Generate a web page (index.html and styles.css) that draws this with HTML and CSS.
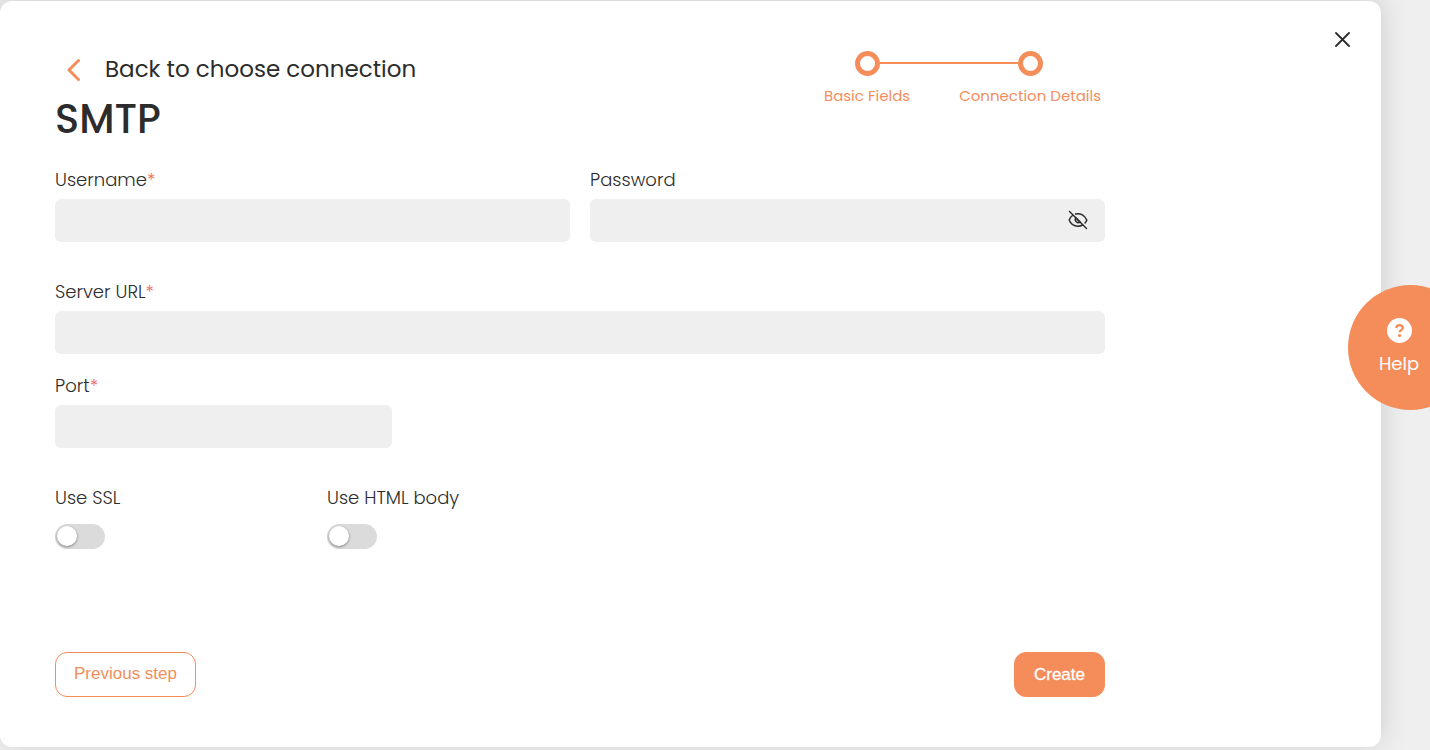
FILE: index.html
```html
<!DOCTYPE html>
<html lang="en">
<head>
    <meta charset="UTF-8">
    <meta name="viewport" content="width=device-width, initial-scale=1.0">
    <title>SMTP connection</title>
    <link rel="stylesheet" href="styles.css">
</head>
<body>
    <main class="panel">
        <button type="button" class="close-btn" aria-label="Close">
            <svg width="16" height="16" viewBox="0 0 16 16" fill="none" stroke="#2c2c2c" stroke-width="1.8" stroke-linecap="round">
                <path d="M2 2l13 13M15 2l-13 13"/>
            </svg>
        </button>

        <form class="connection-form">
            <header class="form-header">
                <div>
                    <a href="#" class="back-link">
                        <svg width="14" height="24" viewBox="0 0 14 24" fill="none" stroke="#f58d5a" stroke-width="3" stroke-linecap="round" stroke-linejoin="round">
                            <path d="M12.500 3.500L3 13l9.500 9.500"/>
                        </svg>
                        Back to choose connection
                    </a>
                    <h1>SMTP</h1>
                </div>
                <ol class="steps">
                    <li class="step">Basic Fields</li>
                    <li class="step">Connection Details</li>
                </ol>
            </header>

            <div class="row two-columns">
                <div class="field">
                    <label for="username">Username<span class="required">*</span></label>
                    <input type="text" id="username">
                </div>
                <div class="field">
                    <label for="password">Password</label>
                    <div class="password-box">
                        <input type="password" id="password">
                        <button type="button" class="eye-btn" aria-label="Show password">
                            <svg width="20" height="20" viewBox="0 0 20 20" fill="none" stroke="#2c2c2c" stroke-width="1.5" stroke-linecap="round">
                                <path d="M1.500 1.500l17 17"/>
                                <path d="M4.500 5.500C3 6.500 1.800 8.200 1.200 10c1.500 4 5 6.200 8.800 6.200 1.700 0 3.200-.4 4.500-1.200"/>
                                <path d="M7.500 4.100C12.500 3 17 5.500 18.800 10c-.4 1.100-1 2.100-1.800 3"/>
                                <path d="M7.800 7.800a3.200 3.200 0 0 0 4.400 4.400z"/>
                            </svg>
                        </button>
                    </div>
                </div>
            </div>

            <div class="row field">
                <label for="server">Server URL<span class="required">*</span></label>
                <input type="text" id="server">
            </div>

            <div class="row three-columns">
                <div class="field">
                    <label for="port">Port<span class="required">*</span></label>
                    <input type="text" id="port">
                </div>
            </div>

            <div class="row switches">
                <div class="switch-field">
                    <label for="ssl">Use SSL</label>
                    <input type="checkbox" class="switch" id="ssl">
                </div>
                <div class="switch-field">
                    <label for="html-body">Use HTML body</label>
                    <input type="checkbox" class="switch" id="html-body">
                </div>
            </div>

            <footer class="actions">
                <button type="button" class="btn btn-outline">Previous step</button>
                <button type="submit" class="btn btn-primary">Create</button>
            </footer>
        </form>
    </main>

    <button type="button" class="help-btn">
        <svg width="26" height="26" viewBox="0 0 26 26" fill="none">
            <circle cx="13.500" cy="13.500" r="12.500" fill="#fff"/>
            <path d="M10.200 11c.2-1.900 1.500-2.900 3.300-2.900 1.900 0 3.300 1.100 3.300 2.800 0 2.400-3.200 2.300-3.200 4.300" stroke="#f58d5a" stroke-width="2.400"/>
            <circle cx="13.600" cy="18.600" r="1.600" fill="#f58d5a"/>
        </svg>
        Help
    </button>
</body>
</html>
```
FILE: styles.css
```css
*,
*::before,
*::after {
    box-sizing: border-box;
}

body {
    margin: 0;
    min-height: 100vh;
    padding: 1px 49px 3px 0;
    display: flex;
    background-color: #efefef;
    color: #2c2c2c;
    font-family: Poppins, Inter, sans-serif;
    overflow: hidden;
}

/* Panel */
.panel {
    position: relative;
    flex: 1;
    padding: 50px 55px;
    background-color: #fff;
    border-radius: 12px;
    box-shadow: 0 -4px 30px rgba(0, 0, 0, 0.15);
}

.close-btn {
    position: absolute;
    top: 30px;
    right: 31px;
    padding: 0;
    border: none;
    background: none;
    line-height: 0;
    cursor: pointer;
}

.connection-form {
    max-width: 1050px;
}

/* Header */
.form-header {
    display: flex;
    justify-content: space-between;
    margin-bottom: 22px;
}

.back-link {
    display: flex;
    align-items: center;
    gap: 25px;
    padding-left: 11px;
    color: inherit;
    font-size: 23px;
    line-height: 36px;
    text-decoration: none;
}

h1 {
    margin: 6px 0 0;
    font-size: 40px;
    font-weight: 500;
    line-height: 52px;
}

.steps {
    display: flex;
    margin: 0;
    padding: 0;
    list-style: none;
}

.step {
    position: relative;
    display: flex;
    flex-direction: column;
    align-items: center;
    gap: 8px;
    color: #f58d5a;
    font-size: 15px;
    line-height: 24px;
}

.step + .step {
    margin-left: 49px;
    margin-right: 4px;
}

.step::before {
    content: "";
    width: 25px;
    height: 25px;
    border: 5px solid #f58d5a;
    border-radius: 50%;
}

/* Line that joins the two circles */
.step + .step::after {
    content: "";
    position: absolute;
    top: 11px;
    right: calc(50% + 12px);
    width: 138px;
    height: 2px;
    background-color: #f58d5a;
}

/* Fields */
.row {
    margin-bottom: 37px;
}

.row.field {
    margin-bottom: 19px;
}

.two-columns {
    display: grid;
    grid-template-columns: repeat(2, 1fr);
    gap: 20px;
}

.three-columns {
    display: grid;
    grid-template-columns: repeat(3, 1fr);
    gap: 20px;
}

.field {
    display: flex;
    flex-direction: column;
    gap: 6px;
}

label {
    font-size: 18px;
    font-weight: 300;
    line-height: 26px;
}

.required {
    color: #f26b5b;
}

.field input {
    width: 100%;
    height: 43px;
    padding: 0 16px;
    border: none;
    border-radius: 6px;
    background-color: #efefef;
    font: inherit;
}

.password-box {
    position: relative;
}

.eye-btn {
    position: absolute;
    top: 11px;
    right: 17px;
    padding: 0;
    border: none;
    background: none;
    line-height: 0;
    cursor: pointer;
}

/* Switches */
.switches {
    display: flex;
}

.switch-field {
    display: flex;
    flex-direction: column;
    gap: 13px;
    width: 272px;
}

.switch {
    appearance: none;
    width: 50px;
    height: 25px;
    margin: 0;
    padding: 2px;
    border-radius: 13px;
    background-color: #dbdbdb;
    cursor: pointer;
}

.switch::before {
    content: "";
    display: block;
    width: 20px;
    height: 20px;
    border-radius: 50%;
    background-color: #fff;
    box-shadow: 0 1px 3px rgba(0, 0, 0, 0.4);
}

.switch:checked {
    background-color: #f58d5a;
}

.switch:checked::before {
    margin-left: auto;
}

/* Buttons */
.actions {
    display: flex;
    justify-content: space-between;
    margin-top: 103px;
}

.btn {
    height: 45px;
    padding: 0 18px 2px;
    border: 1px solid #f58d5a;
    border-radius: 12px;
    font-family: "Liberation Sans", Arial, sans-serif;
    font-size: 17px;
    cursor: pointer;
}

.btn-outline {
    background-color: #fff;
    color: #f58d5a;
}

.btn-primary {
    padding: 0 19px;
    background-color: #f58d5a;
    color: #fff;
    -webkit-text-stroke: 0.3px #fff;
}

/* Help bubble, half outside the window */
.help-btn {
    position: fixed;
    top: 285px;
    right: -43px;
    display: flex;
    flex-direction: column;
    align-items: center;
    gap: 8px;
    width: 125px;
    height: 125px;
    padding: 32px 23px 0 0;
    border: none;
    border-radius: 50%;
    background-color: #f58d5a;
    color: #fff;
    font: 400 18px/26px Poppins, Inter, sans-serif;
    cursor: pointer;
}
```
